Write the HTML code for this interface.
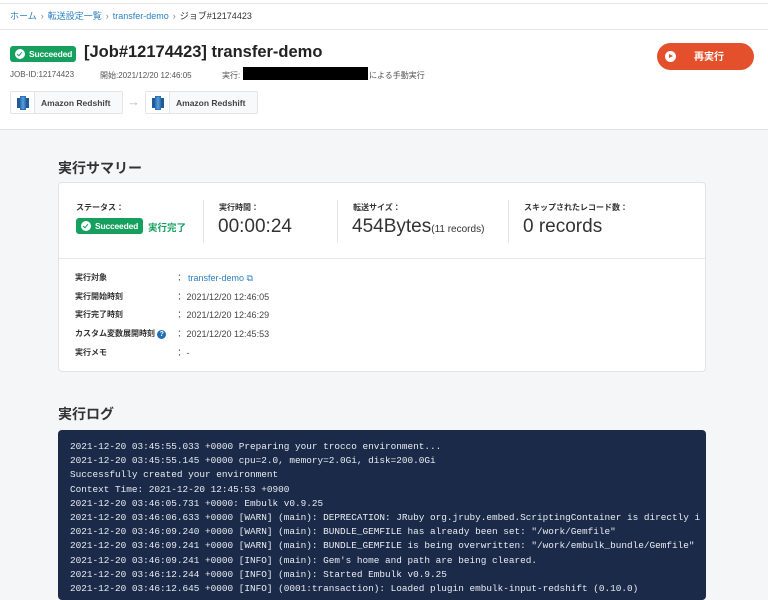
<!DOCTYPE html>
<html><head><meta charset="utf-8"><style>
*{box-sizing:border-box;margin:0;padding:0}
body{width:768px;height:594px;overflow:hidden;background:#f5f6f7;font-family:"Liberation Sans","Noto Sans CJK JP",sans-serif;color:#333;position:relative}
.abs{position:absolute}
.hdr{left:0;top:0;width:768px;height:130px;background:#fff;border-bottom:1px solid #e2e2e2}
.bc{top:3px;left:0;width:768px;height:27px;border-top:1px solid #e6e6e6;border-bottom:1px solid #e6e6e6;font-size:9px;line-height:25px;padding-left:10px;color:#333}
.bc a{color:#2d7fc1;text-decoration:none}
.bc i{font-style:normal;color:#888;margin:0 4px}
.badge{background:#16a05d;color:#fff;border-radius:3px;font-size:8.5px;font-weight:bold;display:flex;align-items:center;padding-left:5px;white-space:nowrap;letter-spacing:-0.2px}
.badge b{display:inline-block;width:10px;height:10px;border-radius:50%;background:#fff;margin-right:4px;position:relative;flex:none}
.badge b:after{content:"";position:absolute;left:3px;top:2px;width:2px;height:4px;border:solid #16a05d;border-width:0 1.5px 1.5px 0;transform:rotate(40deg)}
.conn{height:23px;border:1px solid #e4e4e4;background:#f8f9fa;border-radius:2px;font-size:8.5px;font-weight:bold;color:#444;display:flex;align-items:center}
.conn .ic{width:24px;height:21px;border-right:1px solid #e4e4e4;display:flex;align-items:center;justify-content:center;margin-right:6px;background:#fff}
.card{left:58px;top:182px;width:648px;height:190px;background:#fff;border:1px solid #e3e3e3;border-radius:4px}
.lbl{font-size:8px;font-weight:bold;color:#333}
.big{font-size:19px;color:#333}
.vl{width:1px;background:#e3e3e3;top:17px;height:43px}
.row{left:16px;font-size:8px;font-weight:bold;color:#333}
.val{left:116px;font-size:9px;color:#444}
.log{left:58px;top:430px;width:648px;height:170px;background:#1b2a48;border-radius:4px;overflow:hidden;font-family:"Liberation Mono",monospace;font-size:9.4px;line-height:14.2px;color:#e8ecf2;padding:10px 0 0 12px;white-space:pre}
h2{font-size:14px;font-weight:bold;color:#333}
</style></head><body>
<div class="abs hdr"></div>
<div class="abs bc"><a>ホーム</a><i>›</i><a>転送設定一覧</a><i>›</i><a>transfer-demo</a><i>›</i>ジョブ#12174423</div>
<div class="abs badge" style="left:10px;top:46px;height:16px;width:66px"><b></b>Succeeded</div>
<div class="abs" style="left:84px;top:43px;font-size:16.5px;font-weight:bold;color:#222">[Job#12174423] transfer-demo</div>
<div class="abs" style="left:10px;top:70px;font-size:8px;color:#555">JOB-ID:12174423</div>
<div class="abs" style="left:100px;top:70px;font-size:8px;color:#555">開始:2021/12/20 12:46:05</div>
<div class="abs" style="left:222px;top:70px;font-size:8px;color:#555">実行:</div>
<div class="abs" style="left:243px;top:67px;width:125px;height:13px;background:#000"></div>
<div class="abs" style="left:369px;top:70px;font-size:8px;color:#555">による手動実行</div>
<div class="abs conn" style="left:10px;top:91px;width:113px"><div class="ic"><svg width="12" height="14" viewBox="0 0 12 14"><rect x="0" y="2" width="3" height="10" fill="#205b98"/><rect x="9" y="2" width="3" height="10" fill="#205b98"/><rect x="3" y="0" width="6" height="14" fill="#2e73b8"/><rect x="4.5" y="1" width="3" height="12" fill="#5294cf"/></svg></div>Amazon Redshift</div>
<div class="abs" style="left:127px;top:94px;color:#bbb;font-size:13px">→</div>
<div class="abs conn" style="left:145px;top:91px;width:113px"><div class="ic"><svg width="12" height="14" viewBox="0 0 12 14"><rect x="0" y="2" width="3" height="10" fill="#205b98"/><rect x="9" y="2" width="3" height="10" fill="#205b98"/><rect x="3" y="0" width="6" height="14" fill="#2e73b8"/><rect x="4.5" y="1" width="3" height="12" fill="#5294cf"/></svg></div>Amazon Redshift</div>
<div class="abs" style="left:657px;top:43px;width:97px;height:27px;border-radius:14px;background:#e5502c">
<span class="abs" style="left:8px;top:8px;width:11px;height:11px;border-radius:50%;background:#fff"></span><span class="abs" style="left:12px;top:11px;border-left:4px solid #e5502c;border-top:2.5px solid transparent;border-bottom:2.5px solid transparent"></span>
<span class="abs" style="left:37px;top:8px;color:#fff;font-size:10px;font-weight:bold;line-height:13px">再実行</span></div>

<h2 class="abs" style="left:58px;top:158px">実行サマリー</h2>
<div class="abs card">
<div class="abs lbl" style="left:17px;top:19px">ステータス：</div>
<div class="abs badge" style="left:17px;top:35px;height:16px;width:67px"><b></b>Succeeded</div>
<div class="abs" style="left:89px;top:37px;font-size:9.5px;font-weight:bold;color:#16a05d">実行完了</div>
<div class="abs vl" style="left:144px"></div>
<div class="abs lbl" style="left:160px;top:19px">実行時間：</div>
<div class="abs big" style="left:159px;top:33px">00:00:24</div>
<div class="abs vl" style="left:278px"></div>
<div class="abs lbl" style="left:294px;top:19px">転送サイズ：</div>
<div class="abs big" style="left:293px;top:33px">454Bytes<span style="font-size:10px">(11 records)</span></div>
<div class="abs vl" style="left:449px"></div>
<div class="abs lbl" style="left:465px;top:19px">スキップされたレコード数：</div>
<div class="abs big" style="left:464px;top:33px">0 records</div>
<div class="abs" style="left:0;top:75px;width:646px;height:1px;background:#e8e8e8"></div>
<div class="abs row" style="top:89px">実行対象</div><div class="abs val" style="top:88px">：<span style="color:#2d7fc1;margin-left:4px">transfer-demo ⧉</span></div>
<div class="abs row" style="top:108px">実行開始時刻</div><div class="abs val" style="top:107px">：&nbsp;2021/12/20 12:46:05</div>
<div class="abs row" style="top:126px">実行完了時刻</div><div class="abs val" style="top:125px">：&nbsp;2021/12/20 12:46:29</div>
<div class="abs row" style="top:145px">カスタム変数展開時刻 <span style="display:inline-block;width:9px;height:9px;border-radius:50%;background:#1f6fb5;color:#fff;font-size:7px;text-align:center;line-height:9px">?</span></div><div class="abs val" style="top:144px">：&nbsp;2021/12/20 12:45:53</div>
<div class="abs row" style="top:164px">実行メモ</div><div class="abs val" style="top:163px">：&nbsp;-</div>
</div>
<h2 class="abs" style="left:58px;top:404px">実行ログ</h2>
<div class="abs log">2021-12-20 03:45:55.033 +0000 Preparing your trocco environment...
2021-12-20 03:45:55.145 +0000 cpu=2.0, memory=2.0Gi, disk=200.0Gi
Successfully created your environment
Context Time: 2021-12-20 12:45:53 +0900
2021-12-20 03:46:05.731 +0000: Embulk v0.9.25
2021-12-20 03:46:06.633 +0000 [WARN] (main): DEPRECATION: JRuby org.jruby.embed.ScriptingContainer is directly i
2021-12-20 03:46:09.240 +0000 [WARN] (main): BUNDLE_GEMFILE has already been set: "/work/Gemfile"
2021-12-20 03:46:09.241 +0000 [WARN] (main): BUNDLE_GEMFILE is being overwritten: "/work/embulk_bundle/Gemfile"
2021-12-20 03:46:09.241 +0000 [INFO] (main): Gem's home and path are being cleared.
2021-12-20 03:46:12.244 +0000 [INFO] (main): Started Embulk v0.9.25
2021-12-20 03:46:12.645 +0000 [INFO] (0001:transaction): Loaded plugin embulk-input-redshift (0.10.0)</div>
</body></html>
